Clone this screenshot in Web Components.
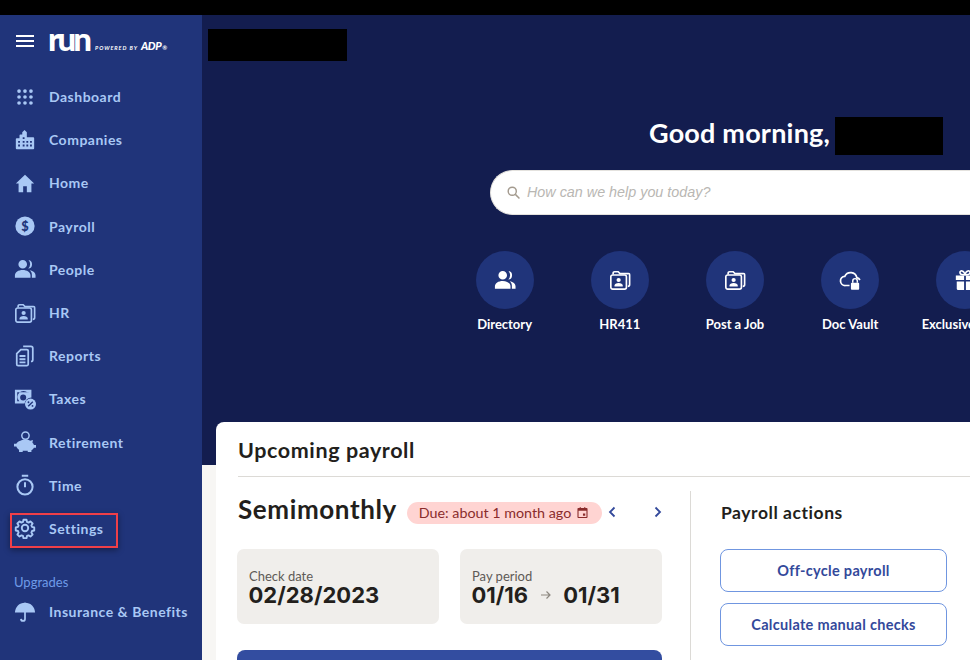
<!DOCTYPE html>
<html lang="en">
<head>
<meta charset="utf-8">
<title>RUN Powered by ADP</title>
<style>
  html, body { margin: 0; height: 100%; overflow: hidden; background: #000; }
  body { font-family: "Lato", "Liberation Sans", sans-serif; }
</style>
</head>
<body>
<run-app></run-app>

<script>
// shared icon set, all drawn on a 24x24 box
const ICONS = {
  menu: '<path d="M0 4h24M0 10.700h24M0 17.300h24" stroke="currentColor" stroke-width="2.500" fill="none"/>',
  dashboard: '<g fill="currentColor"><circle cx="5.500" cy="5.500" r="2"/><circle cx="12" cy="5.500" r="2"/><circle cx="18.500" cy="5.500" r="2"/><circle cx="5.500" cy="12" r="2"/><circle cx="12" cy="12" r="2"/><circle cx="18.500" cy="12" r="2"/><circle cx="5.500" cy="18.500" r="2"/><circle cx="12" cy="18.500" r="2"/><circle cx="18.500" cy="18.500" r="2"/></g>',
  companies: '<path fill="currentColor" fill-rule="evenodd" d="M3 22a1 1 0 0 1-1-1V11a1 1 0 0 1 1-1h3V7a1 1 0 0 1 1-1h2V3.500L11.500 1 14 3.500V9h7a1 1 0 0 1 1 1v11a1 1 0 0 1-1 1H3zM4.500 13v2h2v-2h-2zm0 4v2h2v-2h-2zm5-8v2h2V9h-2zm0 4v2h2v-2h-2zm0 4v2h2v-2h-2zm4-4v2h2v-2h-2zm0 4v2h2v-2h-2zm4-4v2h2v-2h-2zm0 4v2h2v-2h-2z"/>',
  home: '<path fill="currentColor" d="M12 3 2 12.500h3V22h5v-6.500h4V22h5v-9.500h3z"/>',
  payroll: '<circle cx="12" cy="12" r="10.500" fill="currentColor"/><text x="12" y="17" text-anchor="middle" font-family="Lato,Liberation Sans,sans-serif" font-size="14" font-weight="900" fill="#20347a">$</text>',
  people: '<path fill="currentColor" d="M9.500 11.500a4.700 4.700 0 1 0 0-9.400 4.700 4.700 0 0 0 0 9.400zM15.500 11.500a4.700 4.700 0 0 0 .3-9.300 6.500 6.500 0 0 1-.3 9.300zM1 21.500v-2.800c0-3.300 3.800-5.700 8.500-5.700s8.500 2.400 8.500 5.700v2.800H1zM19.500 21.500h4v-2.600c0-2.700-2.600-4.800-6.300-5.500 1.500 1.300 2.300 3 2.300 5.100v3z"/>',
  folder: '<g fill="none" stroke="currentColor" stroke-width="1.800"><path d="M2 8.500a2 2 0 0 1 2-2h13a2 2 0 0 1 2 2V20a2 2 0 0 1-2 2H4a2 2 0 0 1-2-2z"/><path d="M4.500 6V4.500a1.500 1.500 0 0 1 1.500-1.500h4l2 2h8.500A1.500 1.500 0 0 1 22.500 6.500V17a2 2 0 0 1-2 2"/></g><circle cx="10.500" cy="12" r="2.300" fill="currentColor"/><path d="M6 19v-1c0-1.700 2-2.700 4.500-2.700S15 16.300 15 18v1z" fill="currentColor"/>',
  reports: '<g fill="none" stroke="currentColor" stroke-width="1.900"><path d="M3 9.500 7.500 5H14a1.500 1.500 0 0 1 1.500 1.500V21a1.500 1.500 0 0 1-1.500 1.500H4.500A1.500 1.500 0 0 1 3 21z"/><path d="M10 1.500h8.500A2 2 0 0 1 20.500 3.500V16a2 2 0 0 1-2 2"/></g><path fill="currentColor" d="M6 11h6.500v2H6zm0 3.500h6.500v2H6zm0 3.500h6.500v2H6z"/>',
  taxes: '<path fill="currentColor" fill-rule="evenodd" d="M1 2h18v8.500a7.500 7.500 0 0 0-7.500 6.500H1V2zm2.500 2.500V14.500h2.300a6 6 0 0 1 9.200-9.500l1.300-.5zM10 7a3.300 3.300 0 1 0 0 6.600A3.300 3.300 0 0 0 10 7z"/><circle cx="18" cy="17.500" r="6" fill="currentColor"/><path d="M15.500 20l5-5" stroke="#20347a" stroke-width="1.500"/><circle cx="15.800" cy="15.500" r="1" fill="#20347a"/><circle cx="20.200" cy="19.500" r="1" fill="#20347a"/>',
  retirement: '<circle cx="12.500" cy="5" r="4" fill="none" stroke="currentColor" stroke-width="1.600"/><path fill="currentColor" d="M7 10.500c3-1.700 8-1.700 10.700 0l3-.8-.6 3c.9.700 1.400 1.600 1.600 2.500H24v3h-2.300c-.5 1.200-1.500 2.100-2.700 2.700V23h-4v-1.500H9.500V23h-4v-2.500C3.800 19.500 2.800 18 2.600 17H0v-3h2.500C3 12.500 4.800 11.300 7 10.500z"/>',
  time: '<g fill="none" stroke="currentColor" stroke-width="2.200"><circle cx="12" cy="14" r="8.300"/><path d="M12 9v5.500M8.500 1.800h7"/></g>',
  settings: '<g transform="translate(12 12) scale(.82) translate(-12 -12)"><path fill="none" stroke="currentColor" stroke-width="2.500" stroke-linejoin="round" d="M10 1h4l.7 3 2 .8 2.600-1.600 2.800 2.800-1.600 2.600.8 2 3 .7v4l-3 .7-.8 2 1.600 2.600-2.800 2.800-2.600-1.600-2 .8-.7 3h-4l-.7-3-2-.8-2.600 1.600-2.800-2.800 1.600-2.600-.8-2-3-.7v-4l3-.7.8-2L1.900 6l2.800-2.800L7.300 4.800l2-.8z"/><circle cx="12" cy="12" r="4.300" fill="none" stroke="currentColor" stroke-width="2.500"/></g>',
  umbrella: '<path fill="currentColor" d="M12 2C5.500 2 1.500 6.500 1 12.500h22C22.500 6.500 18.500 2 12 2z"/><path d="M12 2v17.500a2.200 2.200 0 0 1-4.400 0" fill="none" stroke="currentColor" stroke-width="1.900"/>',
  search: '<g fill="none" stroke="currentColor" stroke-width="2.300"><circle cx="10" cy="10" r="6.500"/><path d="M15 15l6.500 6.500"/></g>',
  cloud: '<path fill="none" stroke="currentColor" stroke-width="1.900" d="M11.500 18H7a5 5 0 0 1-.7-10A7 7 0 0 1 19.500 9.500c1.500.4 2.700 1.300 3.300 2.500"/><path fill="none" stroke="currentColor" stroke-width="1.600" d="M15 15v-2a2.500 2.500 0 0 1 5 0v2"/><rect x="13" y="15" width="9" height="7.500" rx="1" fill="currentColor"/>',
  gift: '<path fill="currentColor" d="M2 7h9v5H2zm11 0h9v5h-9zM3 13.500h8V23H4.500A1.500 1.500 0 0 1 3 21.500zm10 0h8v8a1.500 1.500 0 0 1-1.500 1.500H13z"/><path fill="none" stroke="currentColor" stroke-width="1.800" d="M12 6.500C9 6.500 6.500 6 6.500 3.800 6.500 1 11 1.500 12 6.500zm0 0c3 0 5.500-.5 5.500-2.700C17.500 1 13 1.500 12 6.500z"/>'
};

function icon(name) {
  return `<svg viewBox="0 0 24 24" width="100%" height="100%" aria-hidden="true">${ICONS[name]}</svg>`;
}

class NavItem extends HTMLElement {
  connectedCallback() {
    const root = this.attachShadow({ mode: 'open' });
    root.innerHTML = `
      <style>
        :host { display: flex; align-items: center; height: 43.2px; padding-left: 14px; color: #a9c8f5; }
        .ic { width: 22px; height: 22px; flex: none; }
        .label { margin-left: 13px; font-size: 14px; font-weight: 700; letter-spacing: .5px; white-space: nowrap; }
      </style>
      <span class="ic">${icon(this.getAttribute('icon'))}</span>
      <span class="label"><slot></slot></span>
    `;
  }
}
customElements.define('nav-item', NavItem);

class SideNav extends HTMLElement {
  connectedCallback() {
    const root = this.attachShadow({ mode: 'open' });
    root.innerHTML = `
      <style>
        :host { display: block; width: 202px; flex: none; background: #20347a; position: relative; }
        .brand { display: flex; align-items: flex-start; height: 60px; padding: 18px 0 0 16px; box-sizing: border-box; color: #fff; }
        .burger { width: 18px; height: 18px; flex: none; }
        .run { font-weight: 900; font-size: 33px; line-height: 18px; letter-spacing: -3px; margin: -4px 0 0 14px; width: 41px; }
        .powered { font-size: 5.500px; font-weight: 700; font-style: italic; letter-spacing: .95px; margin: 6px 0 0 6px; white-space: nowrap; display: flex; align-items: baseline; }
        .adp { font-size: 11px; font-weight: 900; font-style: italic; margin-left: 3px; letter-spacing: -.4px; }
        .reg { font-size: 6px; font-style: normal; margin-left: 1px; }
        .upgrades { color: #6f9be8; font-size: 13px; padding: 24px 0 0 14px; height: 16px; line-height: 16px; }
        .settings-mark { position: absolute; left: 10px; top: 498px; width: 108px; height: 35px; box-sizing: border-box; border: 2px solid #ef3f48; box-shadow: 0 2px 6px rgba(0,0,0,.4); }
      </style>
      <div class="brand">
        <span class="burger">${icon('menu')}</span>
        <span class="run">run</span>
        <span class="powered">POWERED BY <span class="adp">ADP</span><span class="reg">®</span></span>
      </div>
      <slot></slot>
      <div class="upgrades">Upgrades</div>
      <slot name="extra"></slot>
      <div class="settings-mark"></div>
    `;
  }
}
customElements.define('side-nav', SideNav);

class QuickLink extends HTMLElement {
  connectedCallback() {
    const root = this.attachShadow({ mode: 'open' });
    root.innerHTML = `
      <style>
        :host { display: flex; flex-direction: column; align-items: center; width: 115.2px; flex: none; color: #fff; }
        .disc { width: 58px; height: 58px; border-radius: 50%; background: #20347a; display: flex; align-items: center; justify-content: center; }
        .ic { width: 22px; height: 22px; }
        .label { margin-top: 7px; font-size: 13px; font-weight: 700; white-space: nowrap; line-height: 16px; padding-right: var(--label-pad, 0); }
      </style>
      <div class="disc"><span class="ic">${icon(this.getAttribute('icon'))}</span></div>
      <div class="label"><slot></slot></div>
    `;
  }
}
customElements.define('quick-link', QuickLink);

class HeroPanel extends HTMLElement {
  connectedCallback() {
    const root = this.attachShadow({ mode: 'open' });
    root.innerHTML = `
      <style>
        :host { display: block; background: #131d4f; height: 450px; color: #fff; position: relative; }
        .blackout { background: #000; }
        .org { position: absolute; left: 6px; top: 14px; width: 139px; height: 32px; }
        .greet { display: flex; align-items: center; padding: 102px 0 0 447px; height: 38px; white-space: nowrap; }
        .greet b { font-size: 27px; font-weight: 700; line-height: 32px; margin-bottom: 6px; letter-spacing: .2px; }
        .name { width: 108px; height: 38px; margin-left: 5px; flex: none; }
        .search { margin: 15px 0 0 288px; height: 45px; box-sizing: border-box; background: #fff; border: 1px solid #e4e2de; border-right: 0; border-radius: 23px 0 0 23px; display: flex; align-items: center; padding: 0 0 2px 15px; color: #a39a8e; }
        .search .ic { width: 15px; height: 15px; flex: none; }
        .search i { margin-left: 6px; font-family: "Liberation Sans", sans-serif; font-size: 14.350px; color: #b9b7b3; }
        .links { display: flex; margin: 36px 0 0 245px; }
      </style>
      <div class="org blackout"></div>
      <div class="greet"><b>Good morning,</b><div class="name blackout"></div></div>
      <div class="search"><span class="ic">${icon('search')}</span><i>How can we help you today?</i></div>
      <div class="links"><slot></slot></div>
    `;
  }
}
customElements.define('hero-panel', HeroPanel);

class StatBox extends HTMLElement {
  connectedCallback() {
    const root = this.attachShadow({ mode: 'open' });
    root.innerHTML = `
      <style>
        :host { display: block; flex: none; height: 75px; box-sizing: border-box; padding: 19px 0 0 12px; background: #f0eeeb; border-radius: 7px; color: #231f1c; }
        .cap { font-size: 13px; line-height: 16px; color: #5e5a56; }
        .val { display: flex; align-items: center; margin-left: -.5px; font-family: "Inter", "Lato", sans-serif; font-size: 22px; font-weight: 700; line-height: 22px; white-space: nowrap; }
      </style>
      <div class="cap">${this.getAttribute('caption')}</div>
      <div class="val"><slot></slot></div>
    `;
  }
}
customElements.define('stat-box', StatBox);

class ActionButton extends HTMLElement {
  connectedCallback() {
    const root = this.attachShadow({ mode: 'open' });
    root.innerHTML = `
      <style>
        :host { display: flex; align-items: center; justify-content: center; width: 227px; height: 43px; box-sizing: border-box; border: 1px solid #7096e0; border-radius: 8px; background: #fff; color: #33499b; font-size: 14.500px; font-weight: 700; letter-spacing: .3px; padding-bottom: 1px; }
      </style>
      <slot></slot>
    `;
  }
}
customElements.define('action-button', ActionButton);

class PayrollCard extends HTMLElement {
  connectedCallback() {
    const root = this.attachShadow({ mode: 'open' });
    root.innerHTML = `
      <style>
        :host { display: block; position: absolute; left: 14px; top: 407px; width: 780px; height: 300px; background: #fff; border-radius: 8px 8px 0 0; color: #231f1c; }
        h2 { margin: 0 0 0 22px; height: 55px; box-sizing: border-box; padding-top: 15px; font-size: 21.500px; line-height: 26px; font-weight: 700; letter-spacing: .6px; border-bottom: 1px solid #dcdad6; }
        .body { display: flex; padding: 14px 0 0 21px; }
        .left { width: 425px; flex: none; }
        .head { display: flex; align-items: center; height: 38px; }
        .head b { font-size: 26px; font-weight: 700; letter-spacing: .6px; padding-bottom: 2px; margin-left: 1px; }
        .due { display: flex; align-items: center; height: 22px; margin: 5px 0 0 10px; padding: 0 14px 0 12px; background: #ffd4d2; border-radius: 11px; font-size: 14.300px; color: #8a2c2c; white-space: nowrap; }
        .due svg { margin-left: 6px; }
        .chev { color: #33499b; margin: 3px 0 0 5px; display: flex; }
        .chev.next { margin-left: 36px; }
        .stats { display: flex; justify-content: space-between; margin-top: 20px; }
        .arrow { margin: 0 12px 0 13px; flex: none; }
        .pay { height: 40px; margin-top: 26px; background: #334da0; border-radius: 8px 8px 0 0; }
        .right { margin-left: 28px; border-left: 1px solid #dcdad6; padding: 8px 0 0 29px; }
        h3 { margin: 0 0 22px 1px; font-size: 17.500px; line-height: 28px; font-weight: 700; letter-spacing: .55px; }
        action-button { margin-bottom: 11px; }
      </style>
      <h2>Upcoming payroll</h2>
      <div class="body">
        <div class="left">
          <div class="head">
            <b>Semimonthly</b>
            <span class="due">Due: about 1 month ago<svg width="11" height="11" viewBox="0 0 12 12"><path fill="currentColor" fill-rule="evenodd" d="M3 0h1v1h4V0h1v1h1.500A1 1 0 0 1 11.500 2v9a1 1 0 0 1-1 1h-9a1 1 0 0 1-1-1V2a1 1 0 0 1 1-1H3zM1.700 4v6.800h8.600V4zM6.500 7h2.500v2.500H6.500z"/></svg></span>
            <span class="chev"><svg width="10" height="12" viewBox="0 0 10 12"><path d="M7.500 1.500 3 6l4.500 4.500" fill="none" stroke="currentColor" stroke-width="1.800"/></svg></span>
            <span class="chev next"><svg width="10" height="12" viewBox="0 0 10 12"><path d="M2.500 1.500 7 6l-4.500 4.500" fill="none" stroke="currentColor" stroke-width="1.800"/></svg></span>
          </div>
          <div class="stats">
            <stat-box caption="Check date" style="width:202px">02/28/2023</stat-box>
            <stat-box caption="Pay period" style="width:202px">01/16<svg class="arrow" width="10" height="10" viewBox="0 0 10 10"><path d="M0 5h9M5.500 1.500 9 5 5.500 8.500" fill="none" stroke="#8d8880" stroke-width="1.200"/></svg>01/31</stat-box>
          </div>
          <div class="pay"></div>
        </div>
        <div class="right">
          <h3>Payroll actions</h3>
          <action-button>Off-cycle payroll</action-button>
          <action-button>Calculate manual checks</action-button>
        </div>
      </div>
    `;
  }
}
customElements.define('payroll-card', PayrollCard);

class RunApp extends HTMLElement {
  connectedCallback() {
    const root = this.attachShadow({ mode: 'open' });
    root.innerHTML = `
      <style>
        :host { display: flex; flex-direction: column; height: 660px; width: 970px; overflow: hidden; background: #000; }
        .shell { display: flex; margin-top: 15px; height: 645px; }
        main { flex: 1; background: #f7f6f4; position: relative; overflow: hidden; }
      </style>
      <div class="shell">
        <side-nav>
          <nav-item icon="dashboard">Dashboard</nav-item>
          <nav-item icon="companies">Companies</nav-item>
          <nav-item icon="home">Home</nav-item>
          <nav-item icon="payroll">Payroll</nav-item>
          <nav-item icon="people">People</nav-item>
          <nav-item icon="folder">HR</nav-item>
          <nav-item icon="reports">Reports</nav-item>
          <nav-item icon="taxes">Taxes</nav-item>
          <nav-item icon="retirement">Retirement</nav-item>
          <nav-item icon="time">Time</nav-item>
          <nav-item icon="settings">Settings</nav-item>
          <nav-item slot="extra" icon="umbrella">Insurance &amp; Benefits</nav-item>
        </side-nav>
        <main>
          <hero-panel>
            <quick-link icon="people">Directory</quick-link>
            <quick-link icon="folder">HR411</quick-link>
            <quick-link icon="folder">Post a Job</quick-link>
            <quick-link icon="cloud">Doc Vault</quick-link>
            <quick-link icon="gift" style="--label-pad:34px">Exclusive</quick-link>
          </hero-panel>
          <payroll-card></payroll-card>
        </main>
      </div>
    `;
  }
}
customElements.define('run-app', RunApp);
</script>
</body>
</html>
